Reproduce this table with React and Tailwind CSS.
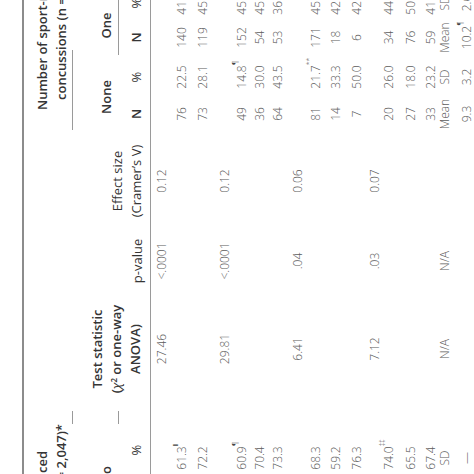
const W = ["w-[40px]", "w-[34px]", "w-[110px]", "w-[66px]", "w-[94px]", "w-[40px]", "w-[34px]", "w-[45px]", "w-[24px]"];

// rows of the table body: [pct, -, test, p, effect, none N, none %, one N, one %]
const rows = [
  { mt: "mt-[5px]", v: [null, null, "27.46", "<.0001", "0.12"] },
  { mt: "mt-[8px]", v: [{ t: "61.3", s: "‖" }, null, null, null, null, "76", "22.5", "140", "41.3"] },
  { mt: "mt-[9px]", v: ["72.2", null, null, null, null, "73", "28.1", "119", "45.7"] },
  { mt: "mt-[10px]", v: [null, null, "29.81", "<.0001", "0.12"] },
  { mt: "mt-[5px]", v: [{ t: "60.9", s: "¶" }, null, null, null, null, "49", { t: "14.8", s: "¶" }, "152", "45.8"] },
  { mt: "mt-[6px]", v: ["70.4", null, null, null, null, "36", "30.0", "54", "45.0"] },
  { mt: "mt-[6px]", v: ["73.3", null, null, null, null, "64", "43.5", "53", "36.1"] },
  { mt: "mt-[8px]", v: [null, null, "6.41", ".04", "0.06"] },
  { mt: "mt-[6px]", v: ["68.3", null, null, null, null, "81", { t: "21.7", s: "**" }, "171", "45.8"] },
  { mt: "mt-[8px]", v: ["59.2", null, null, null, null, "14", "33.3", "18", "42.9"] },
  { mt: "mt-[9px]", v: ["76.3", null, null, null, null, "7", "50.0", "6", "42.9"] },
  { mt: "mt-[6px]", v: [null, null, "7.12", ".03", "0.07"] },
  { mt: "mt-[2px]", v: [{ t: "74.0", s: "‡‡" }, null, null, null, null, "20", "26.0", "34", "44.2"] },
  { mt: "mt-[10px]", v: ["65.5", null, null, null, null, "27", "18.0", "76", "50.7"] },
  { mt: "mt-[8px]", v: ["67.4", null, null, null, null, "33", "23.2", "59", "41.5"] },
  { mt: "mt-[2px]", v: ["SD", null, "N/A", "N/A", null, "Mean", "SD", "Mean", "SD"] },
  { mt: "mt-[10px]", v: ["—", null, null, null, null, "9.3", "3.2", { t: "10.2", s: "¶" }, "2.6"] },
];

function Val({ v }) {
  if (!v) return null;
  if (typeof v === "string") return <span>{v}</span>;
  return (
    <span className="relative">
      {v.t}
      <span className="absolute left-full -top-[4px] text-[7px] leading-none text-[#444]">{v.s}</span>
    </span>
  );
}

function Row({ mt, v }) {
  return (
    <div className={`${mt} flex h-[12px] items-center`}>
      {W.map((w, i) => (
        <div key={i} className={`${w} shrink-0 flex justify-center whitespace-nowrap`}>
          <Val v={v[i]} />
        </div>
      ))}
    </div>
  );
}

export default function App() {
  return (
    <div className="w-[474px] h-[474px] overflow-hidden bg-white">
      {/* the whole table is printed sideways in the source image */}
      <div className="w-[474px] h-[474px] -rotate-90 font-['Open_Sans',sans-serif]">
        <div className="h-[22px]" />
        <div className="h-[2px] w-[474px] bg-[#8c8c8c]" />

        {/* header */}
        <div className="flex h-[126px] -ml-[4px] w-[487px] text-[13px] text-[#353535] font-semibold">
          {/* left group, mostly cut off */}
          <div className="w-[67px] shrink-0 flex flex-col">
            <div className="mt-[9px] h-[19px] leading-[19px] flex justify-end pr-[40px] whitespace-nowrap">Symptoms experienced</div>
            <div className="h-[19px] leading-[19px] flex justify-end pr-[13px] whitespace-nowrap">(n = 2,047)*</div>
            <div className="mt-[1px] h-px ml-[54px] bg-[#9a9a9a]" />
            <div className="mt-[24px] h-[19px] leading-[19px] flex justify-end pr-[55px] whitespace-nowrap">No</div>
            <div className="mt-[2px] h-px ml-[54px] bg-[#9a9a9a]" />
            <div className="mt-[8px] h-[19px] leading-[19px] w-[40px] pl-[16px] text-center font-normal">%</div>
          </div>
          <div className="w-[7px] shrink-0" />
          <div className="w-[110px] shrink-0 flex flex-col items-center">
            <div className="mt-[64px] h-[19px] leading-[19px] whitespace-nowrap">Test statistic</div>
            <div className="h-[19px] leading-[19px] whitespace-nowrap">
              (<i className="font-normal">χ</i>
              <sup className="text-[8px]">2</sup> or one-way
            </div>
            <div className="h-[19px] leading-[19px] whitespace-nowrap">ANOVA)</div>
          </div>
          <div className="w-[66px] shrink-0 flex flex-col items-center font-normal">
            <div className="mt-[104px] h-[19px] leading-[19px] whitespace-nowrap">p-value</div>
          </div>
          <div className="w-[94px] shrink-0 flex flex-col items-center font-normal">
            <div className="mt-[84px] h-[19px] leading-[19px] whitespace-nowrap">Effect size</div>
            <div className="h-[19px] leading-[19px] whitespace-nowrap">(Cramer’s V)</div>
          </div>
          {/* right group */}
          <div className="w-[143px] shrink-0 flex flex-col">
            <div className="mt-[9px] h-[19px] leading-[19px] pl-[24px] whitespace-nowrap">Number of sport-related</div>
            <div className="h-[19px] leading-[19px] pl-[34px] whitespace-nowrap">concussions (n = 2,047)</div>
            <div className="mt-[1px] h-px ml-[4px] w-[80px] bg-[#9a9a9a]" />
            <div className="mt-[24px] h-[19px] flex leading-[19px]">
              <div className="w-[74px] text-center">None</div>
              <div className="w-[69px] text-center">One</div>
            </div>
            <div className="mt-[2px] h-px ml-[79px] bg-[#9a9a9a]" />
            <div className="mt-[8px] h-[19px] flex leading-[19px]">
              <div className="w-[40px] text-center">N</div>
              <div className="w-[34px] text-center font-normal">%</div>
              <div className="w-[45px] text-center">N</div>
              <div className="w-[24px] text-center font-normal">%</div>
            </div>
          </div>
        </div>
        <div className="h-px w-[474px] bg-[#9a9a9a]" />

        {/* body */}
        <div className="-ml-[4px] w-[487px] text-[12px] leading-none font-light text-[#5c5c5c]">
          {rows.map((r, i) => (
            <Row key={i} mt={r.mt} v={r.v} />
          ))}
        </div>
      </div>
    </div>
  );
}
